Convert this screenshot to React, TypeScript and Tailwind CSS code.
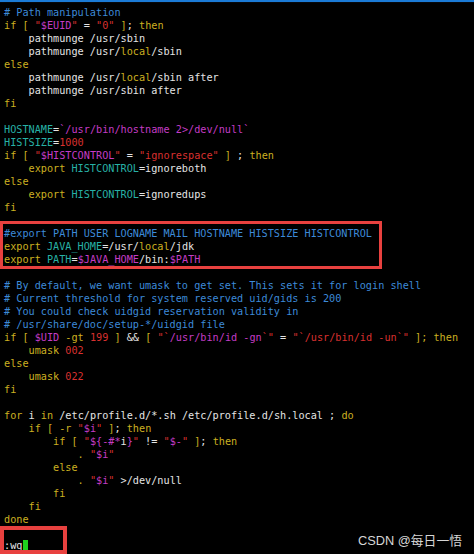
type Seg = [string, keyof typeof tone]

const tone = {
    w: 'text-[#e4e4e4]',
    c: 'text-[#3d8ad8]',
    y: 'text-[#ccb020]',
    t: 'text-[#27b1a6]',
    r: 'text-[#d8302f]',
    m: 'text-[#c43cc6]',
}

// vim sh highlighting, one entry per screen line
const lines: Seg[][] = [
    [['# Path manipulation', 'c']],
    [['if [ ', 'y'], ['"', 'r'], ['$EUID', 'm'], ['"', 'r'], [' = ', 'w'], ['"0"', 'r'], [' ]', 'y'], ['; ', 'w'], ['then', 'y']],
    [['    pathmunge /usr/sbin', 'w']],
    [['    pathmunge /usr/', 'w'], ['local', 'y'], ['/sbin', 'w']],
    [['else', 'y']],
    [['    pathmunge /usr/', 'w'], ['local', 'y'], ['/sbin after', 'w']],
    [['    pathmunge /usr/sbin after', 'w']],
    [['fi', 'y']],
    [],
    [['HOSTNAME', 't'], ['=', 'w'], ['`/usr/bin/hostname 2>/dev/null`', 'm']],
    [['HISTSIZE', 't'], ['=', 'w'], ['1000', 'r']],
    [['if [ ', 'y'], ['"', 'r'], ['$HISTCONTROL', 'm'], ['"', 'r'], [' = ', 'w'], ['"ignorespace"', 'r'], [' ]', 'y'], [' ; ', 'w'], ['then', 'y']],
    [['    export ', 'y'], ['HISTCONTROL', 't'], ['=ignoreboth', 'w']],
    [['else', 'y']],
    [['    export ', 'y'], ['HISTCONTROL', 't'], ['=ignoredups', 'w']],
    [['fi', 'y']],
    [],
    [['#export PATH USER LOGNAME MAIL HOSTNAME HISTSIZE HISTCONTROL', 'c']],
    [['export ', 'y'], ['JAVA_HOME', 't'], ['=/usr/', 'w'], ['local', 'y'], ['/jdk', 'w']],
    [['export ', 'y'], ['PATH', 't'], ['=', 'w'], ['$JAVA_HOME', 'm'], ['/bin:', 'w'], ['$PATH', 'm']],
    [],
    [['# By default, we want umask to get set. This sets it for login shell', 'c']],
    [['# Current threshold for system reserved uid/gids is 200', 'c']],
    [['# You could check uidgid reservation validity in', 'c']],
    [['# /usr/share/doc/setup-*/uidgid file', 'c']],
    [
        ['if [ ', 'y'], ['$UID', 'm'], [' -gt ', 'y'], ['199', 'r'], [' ]', 'y'], [' && ', 'w'], ['[ ', 'y'],
        ['"`', 'r'], ['/usr/bin/id -gn', 'm'], ['`"', 'r'], [' = ', 'w'], ['"`/usr/bin/id -un`"', 'r'],
        [' ];', 'y'], [' ', 'w'], ['then', 'y'],
    ],
    [['    umask ', 'y'], ['002', 'r']],
    [['else', 'y']],
    [['    umask ', 'y'], ['022', 'r']],
    [['fi', 'y']],
    [],
    [['for ', 'y'], ['i ', 'w'], ['in ', 'y'], ['/etc/profile.d/*.sh /etc/profile.d/sh.local ; ', 'w'], ['do', 'y']],
    [['    if [ -r ', 'y'], ['"', 'r'], ['$i', 'm'], ['"', 'r'], [' ]', 'y'], ['; ', 'w'], ['then', 'y']],
    [
        ['        if [ ', 'y'], ['"', 'r'], ['${-#*', 'm'], ['i', 'w'], ['}', 'm'], ['"', 'r'], [' != ', 'w'],
        ['"', 'r'], ['$-', 'm'], ['"', 'r'], [' ]', 'y'], ['; ', 'w'], ['then', 'y'],
    ],
    [['            . ', 'y'], ['"', 'r'], ['$i', 'm'], ['"', 'r']],
    [['        else', 'y']],
    [['            . ', 'y'], ['"', 'r'], ['$i', 'm'], ['"', 'r'], [' >/dev/null', 'w']],
    [['        fi', 'y']],
    [['    fi', 'y']],
    [['done', 'y']],
    [],
]

export default function App() {
    return (
        <div className="relative w-[474px] h-[554px] overflow-hidden bg-black">
            {/* Window top edge */}
            <div className="h-[2px] bg-[#1b7bd6]" />
            <div className="h-[1px] bg-[#06080c]" />

            {/* Buffer */}
            <pre className="pl-[4px] pt-[3px] text-[10.2px] leading-[13px] font-['DejaVu_Sans_Mono',monospace] whitespace-pre">
                {lines.map((segs, i) => (
                    <div key={i} className="h-[13px]">
                        {segs.map(([text, c], j) => (
                            <span key={j} className={tone[c]}>
                                {text}
                            </span>
                        ))}
                    </div>
                ))}
                {/* Command line */}
                <div className="flex h-[13px] items-center text-[#e4e4e4]">
                    <span>:wq</span>
                    <span className="ml-[1px] h-[12px] w-[5px] bg-[#1ed21e]" />
                </div>
            </pre>

            {/* Annotation boxes */}
            <div className="absolute left-0 top-[221px] h-[48px] w-[382px] border-[3.5px] border-[#e8413f]" />
            <div className="absolute left-0 top-[526px] h-[28px] w-[67px] border-[4px] border-[#e8413f]" />

            {/* Watermark */}
            <div className="absolute right-[12px] top-[532px] text-[12.8px] leading-[18px] text-[#d6d6d6] font-['Liberation_Sans','Noto_Sans_CJK_SC',sans-serif]">
                CSDN @每日一悟
            </div>
        </div>
    )
}
